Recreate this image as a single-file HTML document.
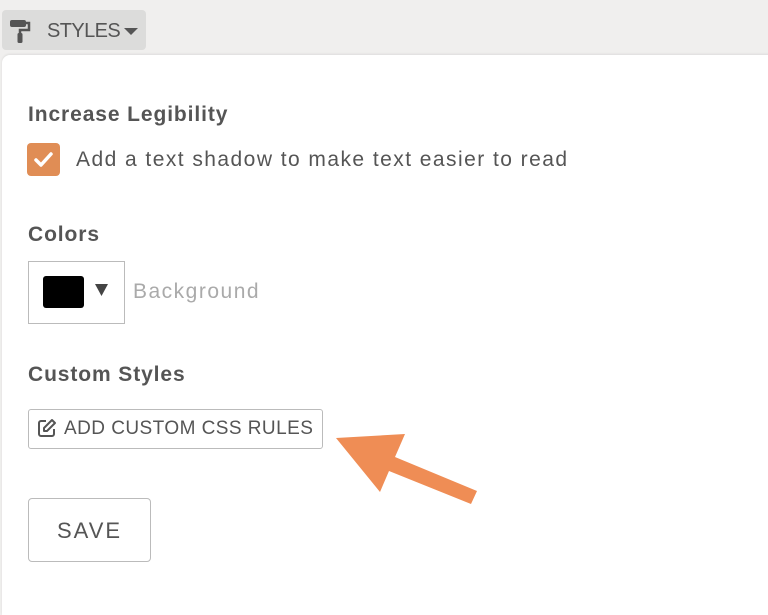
<!DOCTYPE html>
<html><head><style>
html,body{margin:0;padding:0;}
body{width:768px;height:592px;background:#f0efee;position:relative;overflow:hidden;font-family:"Liberation Sans",sans-serif;color:#555;}
.abs{position:absolute;}
.panel{left:2px;top:55px;width:780px;height:560px;background:#fff;border-radius:8px 0 0 0;box-shadow:0 -1px 2px rgba(0,0,0,.08);}
.btn{left:2px;top:10px;width:144px;height:40px;background:#dcdcdb;border-radius:4px;}
h{position:absolute;font-weight:bold;font-size:21px;color:#555;letter-spacing:0.9px;}
</style></head><body>
<div class="abs btn"></div>
<svg class="abs" style="left:9px;top:18px" width="24" height="26" viewBox="0 0 24 26">
<rect x="1" y="2" width="16" height="7" rx="2" fill="#555"/>
<path d="M17 5h3v7h-9v4" stroke="#555" stroke-width="2.5" fill="none"/>
<rect x="8.5" y="15" width="5" height="10" rx="1.5" fill="#555"/>
</svg>
<div class="abs" style="left:47px;top:20px;font-size:20px;color:#555;letter-spacing:-0.6px;">STYLES</div>
<svg class="abs" style="left:124px;top:28px" width="14" height="8"><path d="M0 0h14L7 7z" fill="#555"/></svg>
<div class="abs panel"></div>
<h style="left:28px;top:103px;">Increase Legibility</h>
<div class="abs" style="left:27px;top:143px;width:33px;height:33px;background:#e08d55;border-radius:4px;"></div>
<svg class="abs" style="left:27px;top:143px" width="33" height="33"><path d="M9 17l5 5 10-11" stroke="#fff" stroke-width="3.5" fill="none" stroke-linecap="round" stroke-linejoin="round"/></svg>
<div class="abs" style="left:76px;top:148px;font-size:21px;color:#555;letter-spacing:1.45px;">Add a text shadow to make text easier to read</div>
<h style="left:28px;top:223px;">Colors</h>
<div class="abs" style="left:28px;top:261px;width:95px;height:61px;border:1.5px solid #bbb;"></div>
<div class="abs" style="left:43px;top:276px;width:41px;height:32px;background:#000;border-radius:3px;"></div>
<svg class="abs" style="left:95px;top:284px" width="14" height="13"><path d="M0 0h13L6.5 12z" fill="#444"/></svg>
<div class="abs" style="left:133px;top:280px;font-size:21px;color:#aaa;letter-spacing:1.5px;">Background</div>
<h style="left:28px;top:363px;">Custom Styles</h>
<div class="abs" style="left:28px;top:409px;width:293px;height:38px;border:1.5px solid #bbb;border-radius:3px;"></div>
<svg class="abs" style="left:37px;top:418px" width="20" height="20" viewBox="0 0 20 20"><path d="M9 3H4a2 2 0 0 0-2 2v11a2 2 0 0 0 2 2h11a2 2 0 0 0 2-2v-5" stroke="#555" stroke-width="2" fill="none"/><path d="M15 2l3 3-8 8H7v-3z" stroke="#555" stroke-width="2" fill="none" stroke-linejoin="round"/></svg>
<div class="abs" style="left:64px;top:418px;font-size:19px;color:#555;letter-spacing:0.45px;">ADD CUSTOM CSS RULES</div>
<div class="abs" style="left:28px;top:498px;width:121px;height:62px;border:1.5px solid #bbb;border-radius:4px;"></div>
<div class="abs" style="left:57px;top:518px;font-size:22px;color:#555;letter-spacing:2px;">SAVE</div>
<svg class="abs" style="left:0;top:0" width="768" height="592"><path d="M336 438L405 434 395 457 477 491 471 504 389 471 380 492Z" fill="#ef8d55"/></svg>
</body></html>
